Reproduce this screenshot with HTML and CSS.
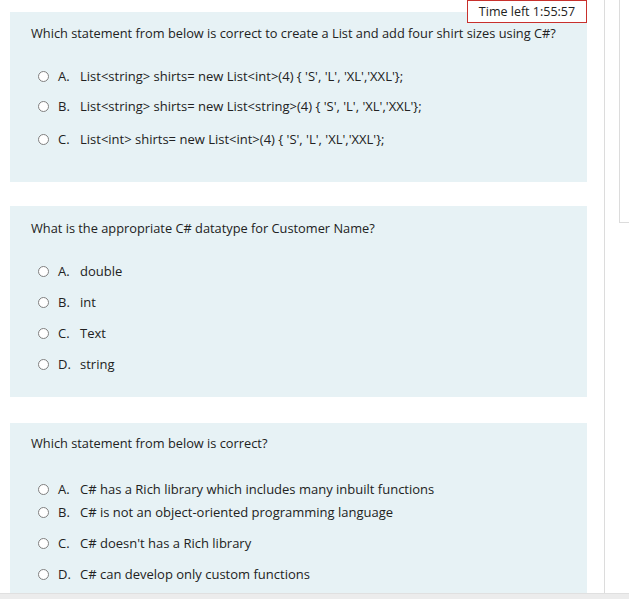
FILE: index.html
```html
<!DOCTYPE html>
<html lang="en">
  <head>
    <meta charset="utf-8" />
    <title>Quiz</title>
    <link rel="stylesheet" href="styles.css">
  </head>
  <body>
    <div class="page">
      <div class="quiz-column">
        <div class="timer">Time left 1:55:57</div>

        <div class="question-card card-one">
          <div class="question-text">Which statement from below is correct to create a List and add four shirt sizes using C#?</div>
          <div class="option gap-24"><span class="radio"></span><span class="letter">A.</span><span>List&lt;string&gt; shirts= new List&lt;int&gt;(4) { 'S', 'L', 'XL','XXL'};</span></div>
          <div class="option gap-10"><span class="radio"></span><span class="letter">B.</span><span>List&lt;string&gt; shirts= new List&lt;string&gt;(4) { 'S', 'L', 'XL','XXL'};</span></div>
          <div class="option gap-13"><span class="radio"></span><span class="letter">C.</span><span>List&lt;int&gt; shirts= new List&lt;int&gt;(4) { 'S', 'L', 'XL','XXL'};</span></div>
        </div>

        <div class="question-card card-two">
          <div class="question-text">What is the appropriate C# datatype for Customer Name?</div>
          <div class="option gap-24"><span class="radio"></span><span class="letter">A.</span><span>double</span></div>
          <div class="option gap-11"><span class="radio"></span><span class="letter">B.</span><span>int</span></div>
          <div class="option gap-11"><span class="radio"></span><span class="letter">C.</span><span>Text</span></div>
          <div class="option gap-11"><span class="radio"></span><span class="letter">D.</span><span>string</span></div>
        </div>

        <div class="question-card card-three">
          <div class="question-text">Which statement from below is correct?</div>
          <div class="option gap-27"><span class="radio"></span><span class="letter">A.</span><span>C# has a Rich library which includes many inbuilt functions</span></div>
          <div class="option gap-3"><span class="radio"></span><span class="letter">B.</span><span>C# is not an object-oriented programming language</span></div>
          <div class="option gap-11"><span class="radio"></span><span class="letter">C.</span><span>C# doesn't has a Rich library</span></div>
          <div class="option gap-11"><span class="radio"></span><span class="letter">D.</span><span>C# can develop only custom functions</span></div>
        </div>
      </div>
      <div class="side-column">
        <div class="side-panel"></div>
      </div>
    </div>
    <div class="bottom-strip"></div>
  </body>
</html>
```

FILE: styles.css
```css
:root {
    --card-bg: #e7f2f5;
    --text: #222;
    --line: #dcdcdc;
    --timer-red: #c8302c;
}
html, body {
    margin: 0;
    padding: 0;
    background: #fff;
    color: var(--text);
    font-family: "Open Sans", "Noto Sans", Arial, sans-serif;
    font-size: 12.8px;
    overflow: hidden;
}

.page {
    display: flex;
    flex-direction: row;
    height: 599px;
}
.quiz-column {
    position: relative;
    width: 605px;
    border-right: 1px solid var(--line);
    padding-top: 12px;
    box-sizing: border-box;
}
.side-column {
    flex: 1;
    padding-left: 14px;
}
.side-panel {
    height: 222px;
    border-left: 1px solid var(--line);
    border-bottom: 1px solid var(--line);
}

.timer {
    position: absolute;
    top: 0;
    left: 467px;
    width: 120px;
    height: 23px;
    box-sizing: border-box;
    border: 1px solid var(--timer-red);
    background: #fff;
    line-height: 21px;
    text-align: center;
    font-size: 12.5px;
}

.question-card {
    margin-left: 10px;
    width: 577px;
    background: var(--card-bg);
    box-sizing: border-box;
    padding-left: 21px;
}
.card-one {
    height: 170px;
    padding-top: 12px;
}
.card-two {
    margin-top: 24px;
    height: 191px;
    padding-top: 13px;
}
.card-three {
    margin-top: 26px;
    height: 180px;
    padding-top: 11px;
}
.question-text {
    line-height: 18px;
}

.option {
    display: flex;
    flex-direction: row;
    align-items: center;
    height: 20px;
    padding-left: 7px;
    font-size: 13px;
}
.gap-3 { margin-top: 3px; }
.gap-10 { margin-top: 10px; }
.gap-11 { margin-top: 11px; }
.gap-13 { margin-top: 13px; }
.gap-24 { margin-top: 24px; }
.gap-27 { margin-top: 27px; }

.radio {
    width: 11px;
    height: 11px;
    border: 1px solid #808080;
    border-radius: 50%;
    background: #fff;
    box-sizing: border-box;
    margin-right: 9px;
}
.letter {
    width: 22px;
}

.bottom-strip {
    position: fixed;
    left: 0;
    bottom: 0;
    width: 100%;
    height: 5px;
    background: #ececec;
    border-top: 1px solid #e0e0e0;
}
```
